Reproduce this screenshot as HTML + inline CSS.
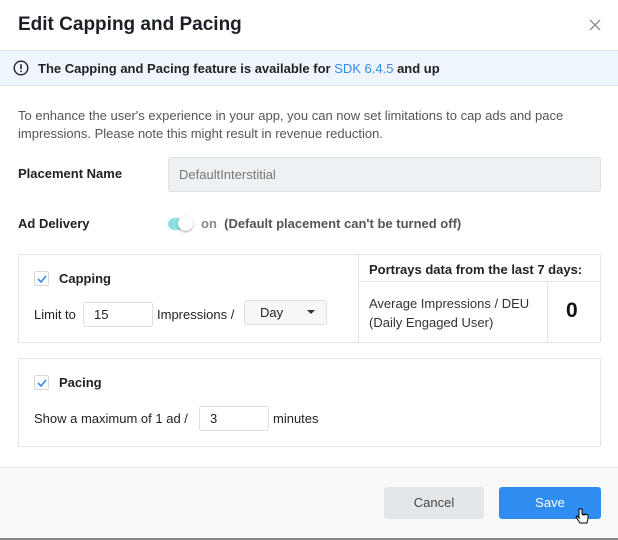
<!DOCTYPE html>
<html><head><style>
*{box-sizing:border-box;margin:0;padding:0}
body{width:618px;height:540px;background:#fff;font-family:"Liberation Sans",sans-serif;color:#222;position:relative;overflow:hidden;font-size:13px}
.a{position:absolute}
.inp{position:absolute;border:1px solid #dcdfe3;border-radius:3px;background:#fff;font-size:13px;padding-left:10px;line-height:26px}
.cb{position:absolute;width:15px;height:15px;border:1px solid #d6d9dd;border-radius:2px;background:#fff}
</style></head><body>
<div class="a" style="left:18px;top:14px;font-size:19px;font-weight:bold;color:#1b1f26">Edit Capping and Pacing</div>
<svg class="a" style="left:589px;top:19px" width="12" height="12"><path d="M1 1L11 11M11 1L1 11" stroke="#8a949e" stroke-width="1.4"/></svg>
<div class="a" style="left:0;top:50px;width:618px;height:36px;background:#eef5fc;border-top:1px solid #dce3ea;border-bottom:1px solid #dce3ea"></div>
<svg class="a" style="left:13px;top:60px" width="16" height="16"><circle cx="8" cy="8" r="6.8" fill="none" stroke="#222" stroke-width="1.4"/><path d="M8 4.2v5" stroke="#222" stroke-width="1.6"/><circle cx="8" cy="11.4" r="0.9" fill="#222"/></svg>
<div class="a" style="left:38px;top:61px;font-weight:bold;font-size:13px;color:#222">The Capping and Pacing feature is available for <span style="color:#2f8cf0;font-weight:normal">SDK 6.4.5</span> and up</div>
<div class="a" style="left:18px;top:107px;width:590px;line-height:18px;color:#555">To enhance the user's experience in your app, you can now set limitations to cap ads and pace impressions. Please note this might result in revenue reduction.</div>
<div class="a" style="left:18px;top:166px;font-weight:bold">Placement Name</div>
<div class="inp" style="left:168px;top:157px;width:433px;height:35px;background:#eef1f4;line-height:33px;color:#777">DefaultInterstitial</div>
<div class="a" style="left:18px;top:216px;font-weight:bold">Ad Delivery</div>
<div class="a" style="left:168px;top:218px;width:24px;height:12px;border-radius:6px;background:#8ee0dc"></div>
<div class="a" style="left:178px;top:216px;width:15px;height:15px;border-radius:50%;background:#fff;box-shadow:0 1px 2px rgba(0,0,0,.35)"></div>
<div class="a" style="left:201px;top:216px;color:#555;font-weight:bold"><span style="color:#888">on</span>&nbsp; (Default placement can't be turned off)</div>
<div class="a" style="left:18px;top:254px;width:583px;height:89px;border:1px solid #e1e4e8;border-radius:2px"></div>
<div class="a" style="left:358px;top:255px;width:1px;height:87px;background:#e1e4e8"></div>
<div class="a" style="left:359px;top:281px;width:241px;height:1px;background:#e1e4e8"></div>
<div class="a" style="left:547px;top:282px;width:1px;height:60px;background:#e1e4e8"></div>
<div class="cb" style="left:34px;top:271px"></div>
<svg class="a" style="left:37px;top:275px" width="10" height="8"><path d="M1 4l3 3 5-6" fill="none" stroke="#2f8cf0" stroke-width="1.6"/></svg>
<div class="a" style="left:59px;top:271px;font-weight:bold">Capping</div>
<div class="a" style="left:34px;top:307px">Limit to</div>
<div class="inp" style="left:83px;top:302px;width:70px;height:25px;line-height:23px">15</div>
<div class="a" style="left:157px;top:307px">Impressions /</div>
<div class="inp" style="left:244px;top:300px;width:83px;height:25px;background:#f6f7f8;line-height:23px;padding-left:15px">Day</div>
<svg class="a" style="left:307px;top:310px" width="8" height="5"><path d="M0 0h8L4 4z" fill="#333"/></svg>
<div class="a" style="left:369px;top:262px;font-weight:bold">Portrays data from the last 7 days:</div>
<div class="a" style="left:369px;top:294px;line-height:19px;color:#333">Average Impressions / DEU<br>(Daily Engaged User)</div>
<div class="a" style="left:566px;top:299px;font-size:21px;font-weight:bold;color:#111">0</div>
<div class="a" style="left:18px;top:358px;width:583px;height:89px;border:1px solid #e1e4e8;border-radius:2px"></div>
<div class="cb" style="left:34px;top:375px"></div>
<svg class="a" style="left:37px;top:379px" width="10" height="8"><path d="M1 4l3 3 5-6" fill="none" stroke="#2f8cf0" stroke-width="1.6"/></svg>
<div class="a" style="left:59px;top:375px;font-weight:bold">Pacing</div>
<div class="a" style="left:34px;top:411px">Show a maximum of 1 ad /</div>
<div class="inp" style="left:199px;top:406px;width:70px;height:25px;line-height:23px">3</div>
<div class="a" style="left:273px;top:411px">minutes</div>
<div class="a" style="left:0;top:467px;width:618px;height:73px;background:#f8f9fa;border-top:1px solid #e1e4e8"></div>
<div class="a" style="left:0;top:538px;width:618px;height:2px;background:#888"></div>
<div class="a" style="left:384px;top:487px;width:100px;height:32px;background:#e4e7ea;border-radius:3px;text-align:center;line-height:32px;color:#444">Cancel</div>
<div class="a" style="left:499px;top:487px;width:102px;height:32px;background:#2f8cf0;border-radius:3px;text-align:center;line-height:32px;color:#fff">Save</div>
<svg class="a" style="left:575px;top:508px" width="14" height="18"><path d="M4 1v9l-2-2-1 1 4 6h7l1-5V7l-2-1-1 1-1-1-1 1-1-1V1z" fill="#fff" stroke="#000" stroke-width="1"/></svg>
</body></html>
